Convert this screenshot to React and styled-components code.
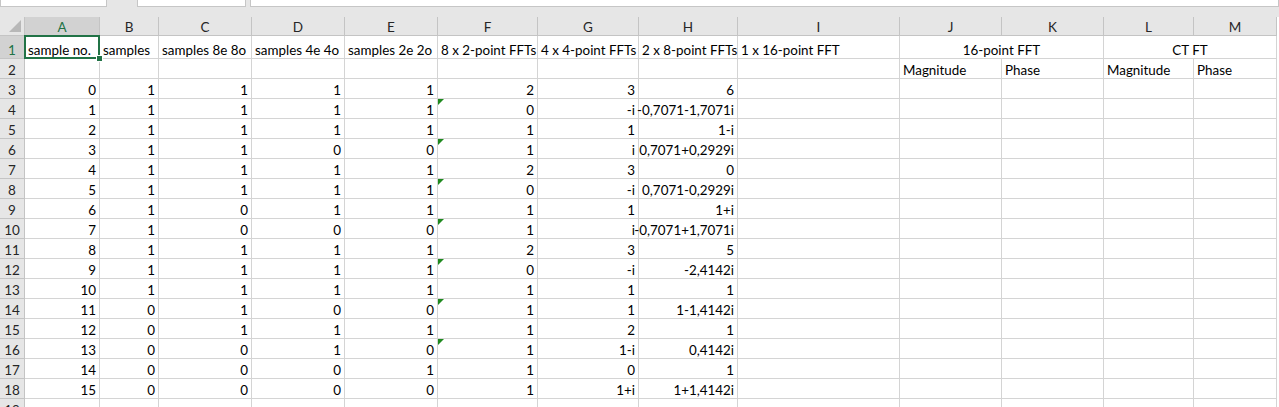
import React from "react";
import styled, { createGlobalStyle, css } from "styled-components";

const GlobalStyle = createGlobalStyle`
  html, body {
    margin: 0;
    padding: 0;
    background: #ffffff;
    overflow: hidden;
  }
  body {
    font-family: Lato, "Liberation Sans", sans-serif;
  }
`;

const GREEN = "#217346";
const GRID = "#d4d4d4";
const HEAD_BG = "#e6e6e6";
const HEAD_LINE = "#c4c4c4";

const COLS = [75, 59, 93, 93, 93, 100, 101, 99, 162, 102, 102, 90, 83];
const LETTERS = ["A", "B", "C", "D", "E", "F", "G", "H", "I", "J", "K", "L", "M"];

const Page = styled.div`
  display: flex;
  flex-direction: column;
  width: 1279px;
  height: 407px;
  overflow: hidden;
`;

const FormulaStrip = styled.div`
  display: flex;
  align-items: flex-start;
  height: 17px;
  background: ${HEAD_BG};
  flex-shrink: 0;
`;

const StripBox = styled.div`
  box-sizing: border-box;
  height: 7px;
  width: ${(p) => p.$w};
  margin-left: ${(p) => p.$ml || "0"};
  flex: ${(p) => (p.$grow ? "1" : "none")};
  background: #ffffff;
  border: 1px solid #c6c6c6;
  border-top: none;
`;

const Sheet = styled.div`
  display: grid;
  grid-template-columns: 25px ${COLS.map((c) => c + "px").join(" ")} 1fr;
  grid-template-rows: 19px 23px repeat(18, 20px);
  font-size: 13.4px;
  color: #000;
`;

const Corner = styled.div`
  box-sizing: border-box;
  background: ${HEAD_BG};
  border-right: 1px solid ${HEAD_LINE};
  border-bottom: 1px solid ${HEAD_LINE};
  display: flex;
  align-items: flex-end;
  justify-content: flex-end;
  padding: 0 3px 3px 0;
`;

const ColHead = styled.div`
  box-sizing: border-box;
  background: ${(p) => (p.$active ? "#d2d2d2" : HEAD_BG)};
  color: ${(p) => (p.$active ? GREEN : "#262626")};
  border-right: 1px solid ${HEAD_LINE};
  border-bottom: 1px solid ${(p) => (p.$active ? GREEN : HEAD_LINE)};
  font-size: 13.5px;
  display: flex;
  align-items: center;
  justify-content: center;
  padding-top: 2px;
`;

const RowHead = styled.div`
  box-sizing: border-box;
  background: ${(p) => (p.$active ? "#d2d2d2" : HEAD_BG)};
  color: ${(p) => (p.$active ? GREEN : "#262626")};
  border-right: 1px solid ${(p) => (p.$active ? GREEN : HEAD_LINE)};
  border-bottom: 1px solid ${HEAD_LINE};
  font-size: 13.5px;
  display: flex;
  align-items: flex-end;
  justify-content: center;
  padding-bottom: 0;
`;

const Cell = styled.div`
  box-sizing: border-box;
  position: relative;
  border-right: 1px solid ${GRID};
  border-bottom: 1px solid ${GRID};
  display: flex;
  align-items: flex-end;
  justify-content: ${(p) =>
    p.$align === "right" ? "flex-end" : p.$align === "center" ? "center" : "flex-start"};
  padding: 0 3px 0 3px;
  white-space: nowrap;
  overflow: visible;
  grid-column: ${(p) => (p.$span ? `span ${p.$span}` : "auto")};
  ${(p) =>
    p.$flag &&
    css`
      &::before {
        content: "";
        position: absolute;
        left: 0;
        top: 0;
        border-style: solid;
        border-width: 6px 6px 0 0;
        border-color: #1e8a1e transparent transparent transparent;
      }
    `}
  ${(p) =>
    p.$selected &&
    css`
      z-index: 2;
      &::after {
        content: "";
        position: absolute;
        left: -1px;
        top: -1px;
        right: -1px;
        bottom: -1px;
        border: 2px solid ${GREEN};
        pointer-events: none;
      }
    `}
`;

const FillHandle = styled.span`
  position: absolute;
  right: -4px;
  bottom: -4px;
  width: 5px;
  height: 5px;
  background: ${GREEN};
  border: 1px solid #ffffff;
  z-index: 3;
`;

const SelectAll = () => (
  <svg width="12" height="12" viewBox="0 0 12 12">
    <polygon points="12,0 12,12 0,12" fill="#b8b8b8" />
  </svg>
);

const HEADER_ROW = [
  "sample no.",
  "samples",
  "samples 8e 8o",
  "samples 4e 4o",
  "samples 2e 2o",
  "8 x 2-point FFTs",
  "4 x 4-point FFTs",
  "2 x 8-point FFTs",
  "1 x 16-point FFT",
];

const B = [1, 1, 1, 1, 1, 1, 1, 1, 1, 1, 1, 0, 0, 0, 0, 0];
const C = [1, 1, 1, 1, 1, 1, 0, 0, 1, 1, 1, 1, 1, 0, 0, 0];
const D = [1, 1, 1, 0, 1, 1, 1, 0, 1, 1, 1, 0, 1, 1, 0, 0];
const E = [1, 1, 1, 0, 1, 1, 1, 0, 1, 1, 1, 0, 1, 0, 1, 0];
const F = [2, 0, 1, 1, 2, 0, 1, 1, 2, 0, 1, 1, 1, 1, 1, 1];
const G = ["3", "-i", "1", "i", "3", "-i", "1", "i", "3", "-i", "1", "1", "2", "1-i", "0", "1+i"];
const H = [
  "6",
  "-0,7071-1,7071i",
  "1-i",
  "0,7071+0,2929i",
  "0",
  "0,7071-0,2929i",
  "1+i",
  "-0,7071+1,7071i",
  "5",
  "-2,4142i",
  "1",
  "1-1,4142i",
  "1",
  "0,4142i",
  "1",
  "1+1,4142i",
];

const EmptyCells = ({ n }) =>
  Array.from({ length: n }, (_, i) => <Cell key={i} />);

export default function App() {
  return (
    <>
      <GlobalStyle />
      <Page>
        <FormulaStrip>
          <StripBox $w="107px" />
          <StripBox $w="109px" $ml="30px" />
          <StripBox $grow $ml="4px" />
        </FormulaStrip>
        <Sheet>
          <Corner>
            <SelectAll />
          </Corner>
          {LETTERS.map((l, i) => (
            <ColHead key={l} $active={i === 0}>
              {l}
            </ColHead>
          ))}
          <div />

          {/* row 1 */}
          <RowHead $active>1</RowHead>
          {HEADER_ROW.map((t, i) => (
            <Cell key={i} $selected={i === 0}>
              {t}
              {i === 0 && <FillHandle />}
            </Cell>
          ))}
          <Cell $span={2} $align="center">16-point FFT</Cell>
          <Cell $span={2} $align="center">CT FT</Cell>
          <div />

          {/* row 2 */}
          <RowHead>2</RowHead>
          <EmptyCells n={9} />
          <Cell>Magnitude</Cell>
          <Cell>Phase</Cell>
          <Cell>Magnitude</Cell>
          <Cell>Phase</Cell>
          <div />

          {/* data rows */}
          {B.map((_, i) => (
            <React.Fragment key={i}>
              <RowHead>{i + 3}</RowHead>
              <Cell $align="right">{i}</Cell>
              <Cell $align="right">{B[i]}</Cell>
              <Cell $align="right">{C[i]}</Cell>
              <Cell $align="right">{D[i]}</Cell>
              <Cell $align="right">{E[i]}</Cell>
              <Cell $align="right" $flag={i % 2 === 1 && i < 14}>
                {F[i]}
              </Cell>
              <Cell $align="right">{G[i]}</Cell>
              <Cell $align="right">{H[i]}</Cell>
              <EmptyCells n={5} />
              <div />
            </React.Fragment>
          ))}

          <RowHead>19</RowHead>
          <EmptyCells n={13} />
          <div />
        </Sheet>
      </Page>
    </>
  );
}
